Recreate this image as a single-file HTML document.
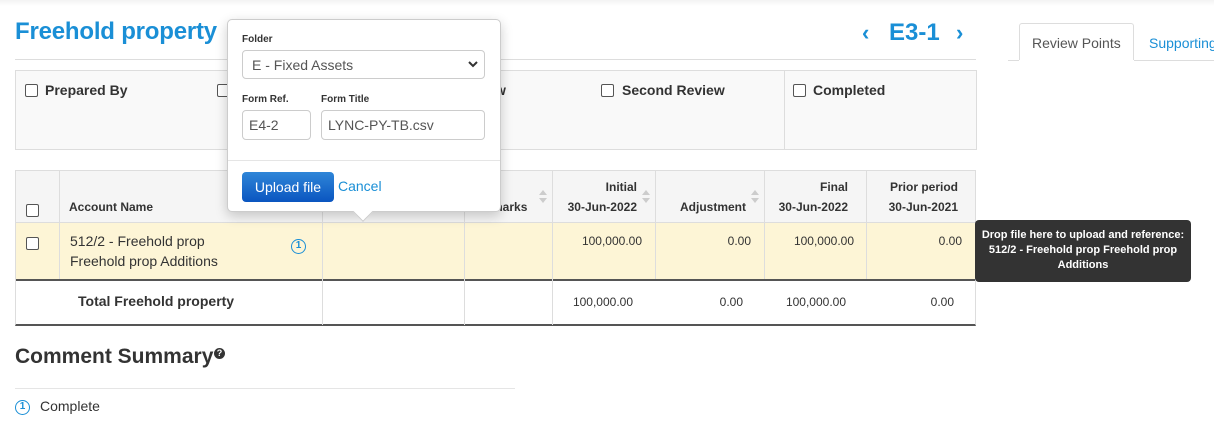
<!DOCTYPE html>
<html><head><style>
*{box-sizing:border-box;margin:0;padding:0}
body{width:1214px;height:433px;position:relative;font-family:"Liberation Sans",Arial,sans-serif;background:#fff;color:#333;overflow:hidden;font-size:13px}
.a{position:absolute}
.cb{position:absolute;width:13px;height:13px;border:1px solid #555;border-radius:2px;background:#fff}
.th{position:absolute;font-weight:bold;font-size:12px;color:#333}
.vl{position:absolute;width:1px;background:#ddd}
.num{position:absolute;font-size:12px;text-align:right}
.circ{position:absolute;width:15px;height:15px;border:1.5px solid #1a8fd6;border-radius:50%;color:#1a8fd6;font-size:10px;text-align:center;line-height:12px;font-weight:bold}
.sort{position:absolute;width:0;height:0;border-left:4px solid transparent;border-right:4px solid transparent}
</style></head><body>
<div class="a" style="left:0;top:0;width:1214px;height:6px;background:linear-gradient(#f3f3f3,#fff)"></div>
<div class="a" style="left:15px;top:18px;font-size:24px;font-weight:bold;color:#1a8fd6;letter-spacing:-0.2px">Freehold property</div>
<div class="a" style="left:862px;top:20px;font-size:22px;font-weight:bold;color:#1a8fd6">‹</div>
<div class="a" style="left:889px;top:19px;font-size:24px;font-weight:bold;color:#1a8fd6">E3-1</div>
<div class="a" style="left:956px;top:20px;font-size:22px;font-weight:bold;color:#1a8fd6">›</div>
<div class="a" style="left:15px;top:59px;width:961px;height:1px;background:#ddd"></div>
<!-- tabs -->
<div class="a" style="left:1019px;top:23px;width:115px;height:38px;border:1px solid #ddd;border-bottom:none;border-radius:3px 3px 0 0;background:#fff"></div>
<div class="a" style="left:1008px;top:60px;width:206px;height:1px;background:#ddd"></div>
<div class="a" style="left:1019px;top:60px;width:115px;height:1px;background:#fff"></div>
<div class="a" style="left:1032px;top:35px;font-size:14px;color:#555">Review Points</div>
<div class="a" style="left:1149px;top:35px;font-size:14px;color:#1a8fd6">Supporting</div>
<!-- filter box -->
<div class="a" style="left:15px;top:70px;width:962px;height:80px;border:1px solid #ddd;background:#f9f9f9"></div>
<div class="vl" style="left:784px;top:71px;height:78px"></div>
<div class="cb" style="left:25px;top:84px"></div><div class="a" style="left:45px;top:82px;font-weight:bold;font-size:14px">Prepared By</div>
<div class="cb" style="left:217px;top:84px"></div>
<div class="a" style="left:495px;top:82px;font-weight:bold;font-size:14px">w</div>
<div class="cb" style="left:601px;top:84px"></div><div class="a" style="left:622px;top:82px;font-weight:bold;font-size:14px">Second Review</div>
<div class="cb" style="left:793px;top:84px"></div><div class="a" style="left:813px;top:82px;font-weight:bold;font-size:14px">Completed</div>
<!-- table -->
<div class="a" style="left:15px;top:170px;width:961px;height:156px;border:1px solid #ddd;border-bottom:2px solid #555"></div>
<div class="a" style="left:16px;top:171px;width:959px;height:51px;background:#f5f5f5"></div>
<div class="a" style="left:16px;top:222px;width:959px;height:58px;background:#fdf5d6;border-top:1px solid #ddd"></div>
<div class="a" style="left:16px;top:279px;width:959px;height:2px;background:#555"></div>
<div class="vl" style="left:59px;top:171px;height:108px"></div>
<div class="vl" style="left:322px;top:171px;height:154px"></div>
<div class="vl" style="left:464px;top:171px;height:154px"></div>
<div class="vl" style="left:552px;top:171px;height:154px"></div>
<div class="vl" style="left:655px;top:171px;height:108px"></div>
<div class="vl" style="left:764px;top:171px;height:108px"></div>
<div class="vl" style="left:866px;top:171px;height:108px"></div>
<div class="cb" style="left:26px;top:204px"></div>
<div class="th" style="left:69px;top:200px">Account Name</div>
<div class="th" style="left:492px;top:200px">marks</div>
<div class="sort" style="left:539px;top:190px;border-bottom:5px solid #ccc"></div><div class="sort" style="left:539px;top:198px;border-top:5px solid #ccc"></div>
<div class="th" style="left:553px;top:180px;width:84px;text-align:right">Initial</div>
<div class="th" style="left:553px;top:200px;width:84px;text-align:right">30-Jun-2022</div>
<div class="sort" style="left:642px;top:190px;border-bottom:5px solid #ccc"></div><div class="sort" style="left:642px;top:198px;border-top:5px solid #ccc"></div>
<div class="th" style="left:656px;top:200px;width:90px;text-align:right">Adjustment</div>
<div class="sort" style="left:751px;top:190px;border-bottom:5px solid #ccc"></div><div class="sort" style="left:751px;top:198px;border-top:5px solid #ccc"></div>
<div class="th" style="left:765px;top:180px;width:83px;text-align:right">Final</div>
<div class="th" style="left:765px;top:200px;width:83px;text-align:right">30-Jun-2022</div>
<div class="th" style="left:867px;top:180px;width:91px;text-align:right">Prior period</div>
<div class="th" style="left:867px;top:200px;width:91px;text-align:right">30-Jun-2021</div>
<div class="cb" style="left:26px;top:237px"></div>
<div class="a" style="left:70px;top:231px;font-size:14px;line-height:20px">512/2 - Freehold prop<br>Freehold prop Additions</div>
<div class="circ" style="left:291px;top:239px">1</div>
<div class="num" style="left:553px;top:234px;width:89px">100,000.00</div>
<div class="num" style="left:656px;top:234px;width:95px">0.00</div>
<div class="num" style="left:765px;top:234px;width:89px">100,000.00</div>
<div class="num" style="left:867px;top:234px;width:95px">0.00</div>
<div class="a" style="left:78px;top:293px;font-weight:bold;font-size:14px">Total Freehold property</div>
<div class="num" style="left:553px;top:295px;width:80px">100,000.00</div>
<div class="num" style="left:656px;top:295px;width:87px">0.00</div>
<div class="num" style="left:765px;top:295px;width:81px">100,000.00</div>
<div class="num" style="left:867px;top:295px;width:87px">0.00</div>
<!-- tooltip -->
<div class="a" style="left:975px;top:220px;width:216px;height:62px;background:#333;border-radius:4px;color:#fff;font-size:11px;font-weight:bold;text-align:center;line-height:15px;padding-top:8px">Drop file here to upload and reference:<br>512/2 - Freehold prop Freehold prop<br>Additions</div>
<!-- comment summary -->
<div class="a" style="left:15px;top:345px;font-size:21px;font-weight:bold">Comment Summary</div>
<div class="a" style="left:214px;top:348px;width:11px;height:11px;border-radius:50%;background:#333;color:#fff;font-size:9px;font-weight:bold;text-align:center;line-height:11px">?</div>
<div class="a" style="left:15px;top:388px;width:500px;height:1px;background:#e5e5e5"></div>
<div class="circ" style="left:15px;top:400px">1</div>
<div class="a" style="left:40px;top:398px;font-size:14px">Complete</div>
<!-- popup -->
<div class="a" style="left:227px;top:19px;width:274px;height:193px;background:#fff;border:1px solid #ccc;border-radius:5px;box-shadow:0 4px 12px rgba(0,0,0,.2)"></div>
<div class="a" style="left:356px;top:205px;width:14px;height:14px;background:#fff;transform:rotate(45deg);border-right:1px solid #ccc;border-bottom:1px solid #ccc"></div>
<div class="a" style="left:242px;top:34px;font-size:10px;font-weight:bold">Folder</div>
<div class="a" style="left:242px;top:50px;width:243px;height:29px;border:1px solid #ccc;border-radius:4px;padding:6px 9px;font-size:14px;color:#555">E - Fixed Assets</div>
<svg class="a" style="left:468px;top:61px" width="10" height="7"><path d="M1 1L5 5L9 1" stroke="#333" stroke-width="2" fill="none"/></svg>
<div class="a" style="left:242px;top:94px;font-size:10px;font-weight:bold">Form Ref.</div>
<div class="a" style="left:321px;top:94px;font-size:10px;font-weight:bold">Form Title</div>
<div class="a" style="left:242px;top:110px;width:69px;height:30px;border:1px solid #ccc;border-radius:4px;padding:6px 6px;font-size:14px;color:#555">E4-2</div>
<div class="a" style="left:321px;top:110px;width:164px;height:30px;border:1px solid #ccc;border-radius:4px;padding:6px 6px;font-size:14px;color:#555">LYNC-PY-TB.csv</div>
<div class="a" style="left:228px;top:160px;width:272px;height:1px;background:#e5e5e5"></div>
<div class="a" style="left:242px;top:172px;width:92px;height:30px;background:linear-gradient(#2f86d8,#0a55c0);border-radius:4px;color:#fff;font-size:14px;text-align:center;line-height:30px">Upload file</div>
<div class="a" style="left:338px;top:178px;font-size:14px;color:#1a8fd6">Cancel</div>
</body></html>
